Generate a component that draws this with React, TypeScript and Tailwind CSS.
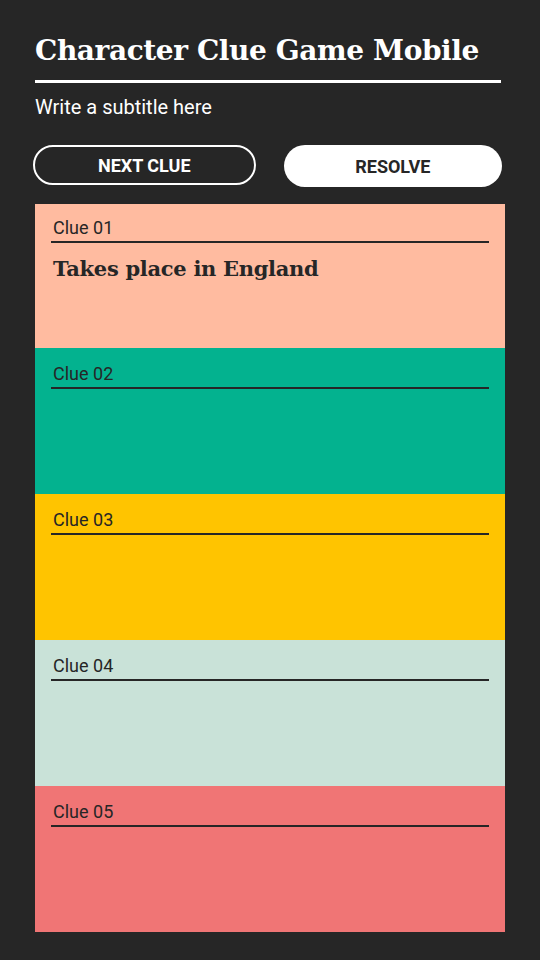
import React from 'react';

const clues = [
  { label: 'Clue 01', text: 'Takes place in England', bg: 'bg-[#ffbba0]' },
  { label: 'Clue 02', text: '', bg: 'bg-[#03b28f]' },
  { label: 'Clue 03', text: '', bg: 'bg-[#ffc400]' },
  { label: 'Clue 04', text: '', bg: 'bg-[#c9e2d8]' },
  { label: 'Clue 05', text: '', bg: 'bg-[#f07575]' },
];

export default function App() {
  return (
    <div className="w-[540px] h-[960px] bg-[#262626] overflow-hidden font-['Roboto',sans-serif]">
      <div className="pt-[31px] px-[35px] pr-[39px]">
        <h1 className="text-white font-bold text-[28px] leading-[40px] font-['DejaVu_Serif',serif] tracking-[-0.4px] whitespace-nowrap">
          Character Clue Game Mobile
        </h1>
        <div className="mt-[9px] h-[3px] bg-white" />
        <p className="mt-[12px] text-white text-[20px] leading-[24px]">Write a subtitle here</p>
      </div>

      <div className="mt-[26px] flex gap-[28px] pl-[33px] pr-[38px]">
        <button className="flex-1 h-[40px] rounded-full border-2 border-white text-white font-bold text-[18px]">
          NEXT CLUE
        </button>
        <button className="flex-1 h-[42px] rounded-full bg-white text-[#262626] font-bold text-[18px]">
          RESOLVE
        </button>
      </div>

      <div className="mt-[17px] mx-[35px] h-[728px] flex flex-col">
        {clues.map((c, i) => (
          <div key={c.label} className={`flex-1 ${c.bg} px-[16px] ${i === 0 ? 'pt-[12px]' : 'pt-[14px]'}`}>
            <div className="border-b-2 border-[#262626] pb-[1px] pl-[2px] text-[18px] leading-[24px] text-[#262626]">
              {c.label}
            </div>
            {c.text && (
              <div className="mt-[11px] pl-[2px] text-[21px] leading-[30px] font-bold text-[#262626] font-['DejaVu_Serif',serif] tracking-[-0.3px]">
                {c.text}
              </div>
            )}
          </div>
        ))}
      </div>
    </div>
  );
}
